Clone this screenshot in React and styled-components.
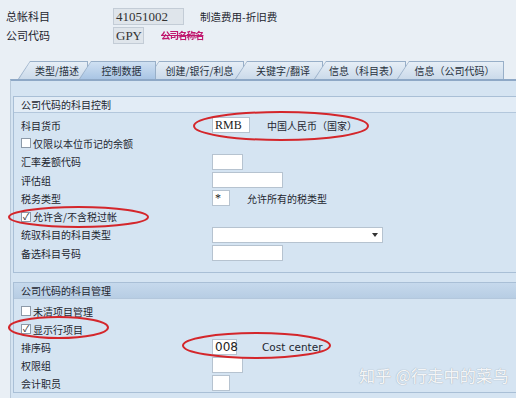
import styled, { createGlobalStyle } from "styled-components";

const GlobalStyle = createGlobalStyle`
  html, body {
    margin: 0;
    padding: 0;
    background: #e9eff5;
  }
  body {
    font-family: "Noto Sans CJK SC", "DejaVu Sans", sans-serif;
    font-size: 10px;
    color: #1e2630;
  }
`;

const Page = styled.div`
  position: relative;
  width: 516px;
  height: 398px;
  overflow: hidden;
  background: #e9eff5;
`;

const Header = styled.div`
  padding: 7px 0 0 6px;
  display: flex;
  flex-direction: column;
  gap: 1px;
`;

const HeaderRow = styled.div`
  display: flex;
  align-items: center;
  height: 18px;
`;

const HeaderLabel = styled.span`
  width: 107px;
  font-size: 11px;
  line-height: 18px;
`;

const ReadOnlyBox = styled.div`
  box-sizing: border-box;
  width: ${(p) => p.$w}px;
  height: 17px;
  background: #dfe5eb;
  border: 1px solid #c3ccd6;
  font-family: "Liberation Serif", "DejaVu Serif", serif;
  font-size: 13px;
  line-height: 15px;
  padding-left: 2px;
  color: #333;
`;

const HeaderText = styled.span`
  margin-left: ${(p) => p.$ml}px;
  font-size: 10.5px;
`;

const Redacted = styled.span`
  margin-left: 17px;
  color: #c0186e;
  font-size: 9.5px;
  font-weight: bold;
  letter-spacing: -1px;
  filter: blur(0.6px);
  text-decoration: line-through;
`;

const TabStrip = styled.div`
  display: flex;
  margin-top: 17px;
  padding-left: 18px;
  height: 18px;
`;

const TabOuter = styled.div`
  box-sizing: border-box;
  width: ${(p) => p.$w}px;
  height: 18px;
  margin-left: -9px;
  padding: 1px 1px 0 1px;
  background: #98afc8;
  clip-path: polygon(12px 0, 100% 0, 100% 100%, 0 100%);
  position: relative;
  z-index: ${(p) => (p.$active ? 2 : 1)};
  &:first-child {
    margin-left: 0;
  }
`;

const TabInner = styled.div`
  height: 17px;
  background: ${(p) =>
    p.$active
      ? "linear-gradient(#cfe0f2, #a9c5e4)"
      : "linear-gradient(#e6eef6, #cbdaea)"};
  clip-path: polygon(11px 0, 100% 0, 100% 100%, 0 100%);
  display: flex;
  align-items: center;
  justify-content: center;
  padding-left: 8px;
  font-size: 10px;
  color: #27313d;
  white-space: nowrap;
`;

const Panel = styled.div`
  margin-left: 10px;
  border-top: 2px solid #8ea8c6;
  border-left: 1px solid #b8c9da;
  background: #d5e4f2;
  padding: 15px 0 0 2px;
  height: 320px;
`;

const Group = styled.div`
  border: 1px solid #a9bfd6;
  border-right: none;
  margin-bottom: ${(p) => p.$mb || 0}px;
  padding-bottom: ${(p) => p.$pb || 0}px;
`;

const GroupTitle = styled.div`
  height: 15px;
  line-height: 15px;
  padding-left: 7px;
  font-size: 10px;
  background: ${(p) =>
    p.$band ? "linear-gradient(#c6d9ec, #b7cde4)" : "#e2ecf6"};
  border-bottom: 1px solid #b3c7dc;
  margin-bottom: ${(p) => p.$gap}px;
`;

const Row = styled.div`
  display: flex;
  align-items: center;
  height: ${(p) => p.$h}px;
  padding-left: 7px;
`;

const Label = styled.span`
  width: 191px;
  font-size: 10px;
  white-space: nowrap;
`;

const CheckLabel = styled.label`
  display: flex;
  align-items: center;
  gap: 2px;
  font-size: 10px;
  white-space: nowrap;
`;

const Box = styled.span`
  box-sizing: border-box;
  width: 10px;
  height: 10px;
  background: #fff;
  border: 1px solid #8d9aa8;
  font-size: 9px;
  line-height: 8px;
  text-align: center;
  color: #222;
`;

const Field = styled.div`
  box-sizing: border-box;
  width: ${(p) => p.$w}px;
  height: 16px;
  background: #fff;
  border: 1px solid #b6c3d0;
  font-family: ${(p) =>
    p.$serif
      ? '"Liberation Serif", "DejaVu Serif", serif'
      : '"DejaVu Sans", sans-serif'};
  font-size: 12px;
  line-height: 14px;
  padding-left: 2px;
  color: #222;
  position: relative;
`;

const Arrow = styled.span`
  position: absolute;
  right: 4px;
  top: 5px;
  width: 0;
  height: 0;
  border-left: 3px solid transparent;
  border-right: 3px solid transparent;
  border-top: 4px solid #333;
`;

const Note = styled.span`
  margin-left: ${(p) => p.$ml}px;
  font-size: ${(p) => p.$size || 10}px;
  font-family: ${(p) =>
    p.$latin
      ? '"DejaVu Sans", sans-serif'
      : '"Noto Sans CJK SC", sans-serif'};
  white-space: nowrap;
`;

const Ellipse = styled.svg`
  position: absolute;
  overflow: visible;
  pointer-events: none;
`;

const Watermark = styled.div`
  position: absolute;
  left: 359px;
  top: 363px;
  font-size: 16px;
  color: rgba(255, 255, 255, 0.9);
  text-shadow: 0 0 1px #a9b4bf, 0 0 1px #a9b4bf;
  letter-spacing: 0.3px;
`;

const tabs = [
  { t: "类型/描述", w: 70 },
  { t: "控制数据", w: 77, active: true },
  { t: "创建/银行/利息", w: 97 },
  { t: "关键字/翻译", w: 88 },
  { t: "信息（科目表）", w: 92 },
  { t: "信息（公司代码）", w: 107 },
];

function Oval({ x, y, w, h }) {
  return (
    <Ellipse style={{ left: x, top: y }} width={w} height={h}>
      <ellipse
        cx={w / 2}
        cy={h / 2}
        rx={w / 2 - 1}
        ry={h / 2 - 1}
        fill="none"
        stroke="#d4262b"
        strokeWidth="2"
      />
    </Ellipse>
  );
}

function Check({ checked, children }) {
  return (
    <CheckLabel>
      <Box>{checked ? "✓" : ""}</Box>
      {children}
    </CheckLabel>
  );
}

export default function App() {
  const h1 = 18.3;
  return (
    <Page>
      <GlobalStyle />
      <Header>
        <HeaderRow>
          <HeaderLabel>总帐科目</HeaderLabel>
          <ReadOnlyBox $w={71}>41051002</ReadOnlyBox>
          <HeaderText $ml={16}>制造费用-折旧费</HeaderText>
        </HeaderRow>
        <HeaderRow>
          <HeaderLabel>公司代码</HeaderLabel>
          <ReadOnlyBox $w={31}>GPY</ReadOnlyBox>
          <Redacted>公司名称名</Redacted>
        </HeaderRow>
      </Header>

      <TabStrip>
        {tabs.map((tab) => (
          <TabOuter key={tab.t} $w={tab.w} $active={tab.active}>
            <TabInner $active={tab.active}>{tab.t}</TabInner>
          </TabOuter>
        ))}
      </TabStrip>

      <Panel>
        <Group $mb={9} $pb={10}>
          <GroupTitle $gap={3}>公司代码的科目控制</GroupTitle>
          <Row $h={h1}>
            <Label>科目货币</Label>
            <Field $w={38} $serif>RMB</Field>
            <Note $ml={17}>中国人民币（国家）</Note>
          </Row>
          <Row $h={h1}>
            <Check>仅限以本位币记的余额</Check>
          </Row>
          <Row $h={h1}>
            <Label>汇率差额代码</Label>
            <Field $w={31} />
          </Row>
          <Row $h={h1}>
            <Label>评估组</Label>
            <Field $w={71} />
          </Row>
          <Row $h={h1}>
            <Label>税务类型</Label>
            <Field $w={18} $serif>*</Field>
            <Note $ml={17}>允许所有的税类型</Note>
          </Row>
          <Row $h={h1}>
            <Check checked>允许含/不含税过帐</Check>
          </Row>
          <Row $h={h1}>
            <Label>统驭科目的科目类型</Label>
            <Field $w={171}>
              <Arrow />
            </Field>
          </Row>
          <Row $h={h1}>
            <Label>备选科目号码</Label>
            <Field $w={71} />
          </Row>
        </Group>

        <Group>
          <GroupTitle $band $gap={3}>公司代码的科目管理</GroupTitle>
          <Row $h={18}>
            <Check>未清项目管理</Check>
          </Row>
          <Row $h={18}>
            <Check checked>显示行项目</Check>
          </Row>
          <Row $h={18}>
            <Label>排序码</Label>
            <Field $w={25}>008</Field>
            <Note $ml={25} $latin $size={10.5}>Cost center</Note>
          </Row>
          <Row $h={18}>
            <Label>权限组</Label>
            <Field $w={31} />
          </Row>
          <Row $h={18}>
            <Label>会计职员</Label>
            <Field $w={18} />
          </Row>
        </Group>
      </Panel>

      <Oval x={193} y={111} w={176} h={30} />
      <Oval x={8} y={206} w={141} h={22} />
      <Oval x={8} y={316} w={101} h={23} />
      <Oval x={182} y={332} w={149} h={27} />

      <Watermark>知乎 @行走中的菜鸟</Watermark>
    </Page>
  );
}
